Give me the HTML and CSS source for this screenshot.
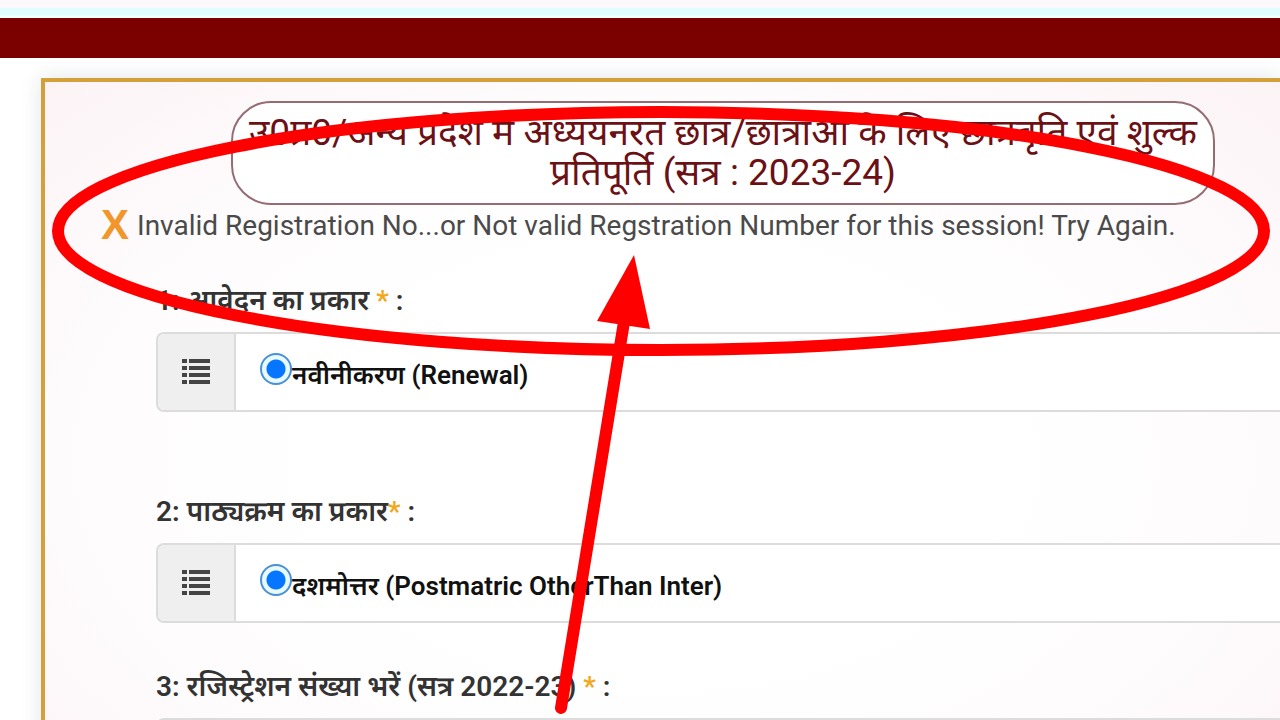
FILE: index.html
```
<!DOCTYPE html>
<html lang="hi">
<head>
    <meta charset="UTF-8">
    <meta name="viewport" content="width=device-width, initial-scale=1.0">
    <title>छात्रवृति एवं शुल्क प्रतिपूर्ति</title>
    <link rel="stylesheet" href="styles.css">
</head>
<body>
    <div class="top-strip"></div>
    <div class="nav-bar"></div>

    <form class="panel">
        <h1 class="panel-title">उ0प्र0/अन्य प्रदेश में अध्ययनरत छात्र/छात्राओं के लिए छात्रवृति एवं शुल्क प्रतिपूर्ति (सत्र : 2023-24)</h1>

        <p class="error"><span class="error-mark">X</span>Invalid Registration No...or Not valid Regstration Number for this session! Try Again.</p>

        <div class="fields">
            <div class="field">
                <div class="field-label">1: आवेदन का प्रकार <span class="required">*</span> :</div>
                <div class="input-group">
                    <span class="addon">
                        <svg class="list-icon" viewBox="0 0 28 26">
                            <path d="M0 0h5v4H0zM7 0h21v4H7zM0 7h5v4H0zM7 7h21v4H7zM0 14h5v4H0zM7 14h21v4H7zM0 21h5v4H0zM7 21h21v4H7z"/>
                        </svg>
                    </span>
                    <div class="control">
                        <input type="radio" id="renewal" name="apptype" checked>
                        <label for="renewal">नवीनीकरण (Renewal)</label>
                    </div>
                </div>
            </div>

            <div class="field">
                <div class="field-label">2: पाठ्यक्रम का प्रकार<span class="required">*</span> :</div>
                <div class="input-group">
                    <span class="addon">
                        <svg class="list-icon" viewBox="0 0 28 26">
                            <path d="M0 0h5v4H0zM7 0h21v4H7zM0 7h5v4H0zM7 7h21v4H7zM0 14h5v4H0zM7 14h21v4H7zM0 21h5v4H0zM7 21h21v4H7z"/>
                        </svg>
                    </span>
                    <div class="control">
                        <input type="radio" id="postmatric" name="course" checked>
                        <label for="postmatric">दशमोत्तर (Postmatric OtherThan Inter)</label>
                    </div>
                </div>
            </div>

            <div class="field">
                <label class="field-label" for="regno">3: रजिस्ट्रेशन संख्या भरें (सत्र 2022-23) <span class="required">*</span> :</label>
                <div class="input-group">
                    <span class="addon"></span>
                    <input class="control" type="text" id="regno">
                </div>
            </div>
        </div>
    </form>

    <!-- red marker over the error message -->
    <svg class="marker" viewBox="0 0 1280 720">
        <ellipse cx="661" cy="231" rx="603" ry="119"/>
        <line x1="561" y1="708" x2="624" y2="322"/>
        <polygon points="634,255 597,321 650,329"/>
    </svg>
</body>
</html>
```

FILE: styles.css
```
* {
    box-sizing: border-box;
}

body {
    margin: 0;
    height: 100vh;
    overflow: hidden;
    position: relative;
    background-color: #fff;
    font-family: Roboto, "Noto Sans Devanagari", "Noto Sans", sans-serif;
    font-size: 28px;
    color: #333;
}

.top-strip {
    height: 18px;
    background: linear-gradient(#fdf8fc 0, #fdf8fc 7px, #dffcff 9px, #dffcff 15px, #fff 17px);
}

.nav-bar {
    height: 40px;
    background-color: #7b0000;
}

.panel {
    margin: 20px 0 0 41px;
    padding: 19px 0 0;
    border: 4px solid #d3a03c;
    border-right: none;
    background: radial-gradient(ellipse at center, #fff 40%, #fefbfc 70%, #fcf3f5 100%);
    box-shadow: 0 0 20px rgba(0, 40, 60, 0.12);
}

.panel-title {
    margin: 0 65px 0 186px;
    padding: 10px 4px;
    border: 2px solid #946c72;
    border-radius: 40px;
    background-color: #fff;
    color: #6b1015;
    font-size: 37px;
    font-weight: 400;
    line-height: 40px;
    text-align: center;
}

.error {
    display: flex;
    align-items: center;
    gap: 8px;
    margin: 0 0 0 56px;
    height: 40px;
    color: #4a4a4a;
    white-space: nowrap;
}

.error-mark {
    color: #f0962a;
    font-family: "Liberation Sans", Arial, sans-serif;
    font-size: 42px;
    font-weight: 700;
}

.fields {
    padding: 36px 0 0 111px;
}

.field {
    margin-bottom: 80px;
}

.field + .field {
    margin-bottom: 44px;
}

.field-label {
    display: block;
    height: 51px;
    font-size: 28px;
    line-height: 40px;
    font-weight: 600;
}

.required {
    color: #f2a81d;
}

.input-group {
    display: flex;
    height: 80px;
    border: 2px solid #dcdcdc;
    border-right: none;
    border-radius: 8px 0 0 8px;
    background-color: #fff;
}

.addon {
    display: flex;
    align-items: center;
    justify-content: center;
    width: 78px;
    border-right: 2px solid #dcdcdc;
    border-radius: 6px 0 0 6px;
    background-color: #efefef;
}

.list-icon {
    width: 28px;
    height: 26px;
    fill: #444;
}

.control {
    flex: 1;
    display: flex;
    align-items: center;
    border: none;
    padding: 0 24px;
    color: #111;
    font-size: 26px;
    font-weight: 600;
}

.control input {
    appearance: none;
    width: 32px;
    height: 32px;
    margin: 0 0 6px;
    border: 2px solid #4a8fd8;
    border-radius: 50%;
    background: radial-gradient(circle, #0675ff 9px, #e6faff 10px);
}

.control label {
    padding-top: 10px;
}

.marker {
    position: absolute;
    top: 0;
    left: 0;
    width: 100%;
    pointer-events: none;
    fill: none;
    stroke: #f00;
    stroke-width: 12;
    stroke-linecap: round;
}

.marker polygon {
    fill: #f00;
    stroke: none;
}
```
